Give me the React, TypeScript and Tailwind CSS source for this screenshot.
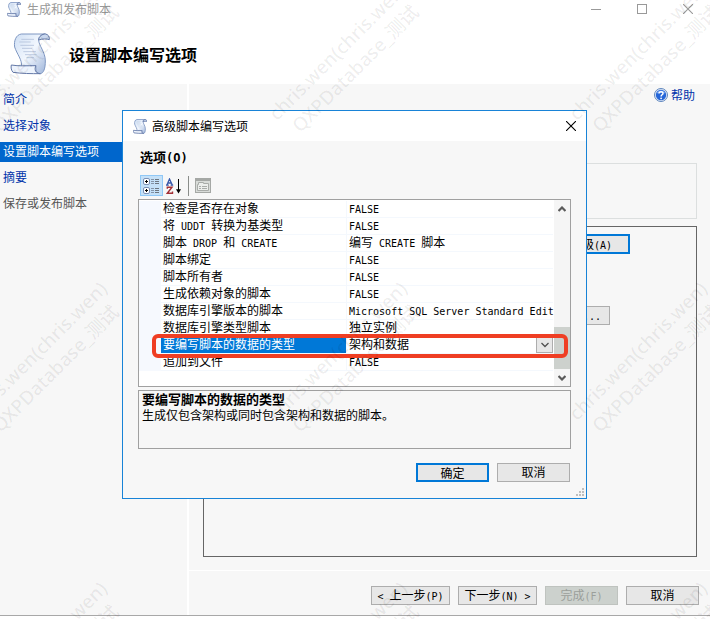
import { useState } from "react";
import type { ReactNode } from "react";

type Property = { name: string, value: string }

const STEPS = ["简介", "选择对象", "设置脚本编写选项", "摘要", "保存或发布脚本"];

const PROPERTIES: Property[] = [
  { name: "检查是否存在对象", value: "FALSE" },
  { name: "将 UDDT 转换为基类型", value: "FALSE" },
  { name: "脚本 DROP 和 CREATE", value: "编写 CREATE 脚本" },
  { name: "脚本绑定", value: "FALSE" },
  { name: "脚本所有者", value: "FALSE" },
  { name: "生成依赖对象的脚本", value: "FALSE" },
  { name: "数据库引擎版本的脚本", value: "Microsoft SQL Server Standard Edit" },
  { name: "数据库引擎类型脚本", value: "独立实例" },
  { name: "要编写脚本的数据的类型", value: "架构和数据" },
  { name: "追加到文件", value: "FALSE" },
];

const DATA_TYPES = ["仅限架构", "仅限数据", "架构和数据"];

// latin runs are half as wide as a chinese character
const Mixed = ({ text, latin = "text-[10px]" }: { text: string, latin?: string }) => (
  <span className="whitespace-pre">
    {text.split(/([ -~]+)/).filter(Boolean).map((part, i) =>
      /^[ -~]/.test(part) ? <span key={i} className={`font-['DejaVu_Sans_Mono',monospace] leading-none ${latin}`}>{part}</span> : part
    )}
  </span>
)

const ScrollIcon = ({ className, id, stroke = 3 }: { className: string, id: string, stroke?: number }) => (
  <svg viewBox="0 0 120 126" className={className} aria-hidden="true">
    <defs>
      <linearGradient id={id} x1="0" y1="0" x2="1" y2="1">
        <stop offset="0" stopColor="#cfdff4" />
        <stop offset="0.5" stopColor="#f2f7fe" />
        <stop offset="1" stopColor="#9fb5da" />
      </linearGradient>
    </defs>
    <path d="M34 3H106C96 4 86 10 86 21C86 38 106 56 106 84C106 106 101 121 91 122C80 122 76 112 78 100H34C38 82 20 62 14 42C11 24 18 5 34 3Z" fill={`url(#${id})`} stroke="#7f97c2" strokeWidth={stroke} />
    <path d="M86 21C86 10 97 3 106 3C114 4 119 10 118 20C110 17 98 17 86 21Z" fill="#c9d8ef" stroke="#6479a8" strokeWidth={stroke} />
    <path d="M4 96C26 100 50 98 78 98C72 108 76 122 91 122C64 122 36 122 9 118C4 112 2 104 4 96Z" fill="#eef4fd" stroke="#6479a8" strokeWidth={stroke} />
    <path d="M34 19H72M28 27H62M31 37H72M36 46H66M40 56H78M45 65H80M49 74H72" stroke="#b3c2db" strokeWidth="2.5" />
  </svg>
)

const CloseIcon = () => (
  <svg viewBox="0 0 10 10" className="size-[10px]" aria-hidden="true">
    <path d="M0 0L10 10M10 0L0 10" stroke="currentColor" strokeWidth="1.1" />
  </svg>
)

const Chevron = ({ up = false, thin = false }: { up?: boolean, thin?: boolean }) => (
  <svg viewBox="0 0 8 6" className="h-[6px] w-2" aria-hidden="true">
    <path d={up ? "M0.5 5L4 1.5L7.5 5" : "M0.5 1L4 4.5L7.5 1"} fill="none" stroke="currentColor" strokeWidth={thin ? 1.3 : 2.2} />
  </svg>
)

const HelpIcon = () => (
  <svg viewBox="0 0 14 14" className="size-[14px]" aria-hidden="true">
    <circle cx="7" cy="7" r="6.5" fill="#e4ecf7" stroke="#5f86bd" />
    <circle cx="7" cy="7" r="5.2" fill="#2566d8" />
    <path d="M2.6 5.5A4.8 4.8 0 0 1 11.4 5.5C9 4.4 5 4.6 2.6 5.5Z" fill="#6fa0f0" />
    <path d="M5 5.6C5 3 9.2 3.1 9 5.5C8.9 6.8 7.1 6.8 7.1 8.4" fill="none" stroke="#fff" strokeWidth="1.5" />
    <circle cx="7.1" cy="10.3" r="0.9" fill="#fff" />
  </svg>
)

const CategoryIcon = () => (
  <svg viewBox="0 0 17 16" className="h-4 w-[17px]" aria-hidden="true">
    {[0, 9].map((y) => (
      <g key={y} transform={`translate(0 ${y})`}>
        <rect x="0.5" y="0.5" width="6" height="6" rx="1.5" fill="#fff" stroke="#7a8fb5" />
        <path d="M2 3.5H5M3.5 2V5" stroke="#000" />
        <path d="M8 1.5H11M8 3.5H11M8 5.5H11" stroke="#8494a8" />
        <path d="M12 1.5H16M12 3.5H16M12 5.5H16" stroke="#6d7680" />
      </g>
    ))}
  </svg>
)

const SortIcon = () => (
  <svg viewBox="0 0 16 16" className="size-4" aria-hidden="true">
    <path d="M0 7.2H2.8M4.6 7.2H7.2M0.9 7L3.5 1L6.3 7M2 5H5" fill="none" stroke="#3556a8" strokeWidth="1.3" />
    <path d="M1.3 10.8V9.3H6L1.3 15.2H6.5V13.6" fill="none" stroke="#a33036" strokeWidth="1.4" />
    <path d="M12.5 1V14" stroke="#000" />
    <path d="M10 11.3H15L12.5 15.5Z" />
  </svg>
)

const PagesIcon = () => (
  <svg viewBox="0 0 16 15" className="h-[15px] w-4" aria-hidden="true">
    <rect x="0.5" y="0.5" width="15" height="14" fill="#d9dcd9" stroke="#a5a8a5" />
    <path d="M1 2H15" stroke="#a5a8a5" strokeWidth="2" />
    <path d="M2.5 6.5V12.5H13.5V5.5H8.5V4.5H3.5V6.5Z" fill="#eceeec" stroke="#a9aca9" />
    <path d="M4 8.5H6M7 8.5H12M4 10.5H6M7 10.5H12" stroke="#a9aca9" />
  </svg>
)

const Button = ({ children, className = "", primary = false, disabled = false }: { children: ReactNode, className?: string, primary?: boolean, disabled?: boolean }) => (
  <button
    type="button"
    disabled={disabled}
    className={`flex h-[19px] items-start justify-center leading-4 whitespace-pre ${primary
      ? "border-2 border-[#0078d7] bg-[#e7e7e7]"
      : disabled
        ? "border border-[#bfc3bf] bg-[#ccd1cd] text-[#9b9f9b]"
        : "border border-[#adadad] bg-[#e7e7e7]"
      } ${className}`}
  >
    {children}
  </button>
)

const PropertyGrid = () => {

  const [dataType, setDataType] = useState("架构和数据")

  return (
    <div className="relative flex h-[188px] border border-[#a0a0a0] bg-white">
      <div className="min-w-0 flex-1 overflow-hidden pt-px pr-px">
        <table className="w-full table-fixed border-separate border-spacing-0 leading-[14px]">
          <colgroup>
            <col className="w-[22px]" />
            <col className="w-[186px]" />
            <col />
          </colgroup>
          <tbody>
            {PROPERTIES.map((p, i) => {
              const selected = i === 8
              return (
                <tr key={p.name} className="h-[17px]">
                  <td className="bg-[#f6f9fe] p-0" />
                  <th
                    scope="row"
                    className={`border-r border-b border-[#f4f8fd] p-0 pl-[2px] text-left font-normal ${selected ? "bg-[#0078d7] text-white" : ""}`}
                  >
                    <div className="h-4">
                      {selected ? <label htmlFor="data-type">{p.name}</label> : <Mixed text={p.name} />}
                    </div>
                  </th>
                  <td className="border-b border-[#f4f8fd] p-0 pl-[2px]">
                    {selected ? (
                      <div className="relative flex h-4">
                        <select
                          id="data-type"
                          value={dataType}
                          onChange={(e) => setDataType(e.target.value)}
                          className="h-[14px] w-full appearance-none bg-transparent p-0 leading-[14px]"
                        >
                          {DATA_TYPES.map((t) => <option key={t}>{t}</option>)}
                        </select>
                        <span className="pointer-events-none absolute inset-y-0 right-0 flex w-[17px] items-center justify-center border border-[#adadad] bg-[#e7e7e7] text-[#505050]">
                          <Chevron thin />
                        </span>
                      </div>
                    ) : <div className="h-4"><Mixed text={p.value} /></div>}
                  </td>
                </tr>
              )
            })}
          </tbody>
        </table>
      </div>

      <div className="flex w-4 flex-col bg-[#f5f5f5] text-[#5a5a5a]">
        <button type="button" aria-label="向上滚动" className="flex h-[18px] items-center justify-center">
          <Chevron up />
        </button>
        <div className="flex flex-1 flex-col justify-end">
          <div className="h-[42px] bg-[#cdd1cd]" />
        </div>
        <button type="button" aria-label="向下滚动" className="flex h-[17px] items-center justify-center">
          <Chevron />
        </button>
      </div>

      {/* marker round the selected property */}
      <div className="pointer-events-none absolute top-[134px] right-[2px] left-[13px] h-6 rounded-md border-4 border-[#ef3e23]" />
    </div>
  )
}

const AdvancedDialog = () => (
  <section role="dialog" aria-label="高级脚本编写选项" className="absolute top-[110px] right-[123px] left-[122px] border border-[#1883d7] bg-[#f7f7f7]">
    <header className="flex h-[30px] items-center bg-white pr-[10px] pl-[10px]">
      <ScrollIcon id="dialog-scroll" stroke={7} className="h-[15px] w-[14px]" />
      <h2 className="ml-[5px] flex-1">高级脚本编写选项</h2>
      <button type="button" aria-label="关闭"><CloseIcon /></button>
    </header>

    <div className="px-[15px] pt-2 pb-4">
      <h3 className="h-4 pl-[2px] text-[13px] leading-4 font-bold">
        <Mixed text="选项(O)" latin="text-xs" />
      </h3>

      <div className="mt-[10px] flex h-[21px] items-center pl-[2px]">
        <button type="button" aria-label="按分类顺序" className="flex h-[21px] w-[23px] items-center justify-center border border-[#90c8f6] bg-[#c5e1f8]">
          <CategoryIcon />
        </button>
        <button type="button" aria-label="字母顺序" className="ml-[3px]"><SortIcon /></button>
        <div className="ml-[6px] h-5 w-px bg-[#8a8d8a]" />
        <button type="button" aria-label="属性页" disabled className="ml-[6px]"><PagesIcon /></button>
      </div>

      <div className="mt-[3px]">
        <PropertyGrid />
      </div>

      <div className="mt-[3px] h-[59px] border border-[#a0a0a0] px-[3px]">
        <h4 className="text-[13px] leading-4 font-bold">要编写脚本的数据的类型</h4>
        <p className="leading-4">生成仅包含架构或同时包含架构和数据的脚本。</p>
      </div>

      <div className="mt-[14px] flex justify-end gap-2 pr-px">
        <Button primary className="w-[73px]">确定</Button>
        <Button className="w-[73px]">取消</Button>
      </div>
    </div>

    <svg viewBox="0 0 8 8" className="absolute right-[2px] bottom-[2px] size-2" shapeRendering="crispEdges" aria-hidden="true">
      <path d="M6 0h2v2h-2zM3 3h2v2h-2zM6 3h2v2h-2zM0 6h2v2h-2zM3 6h2v2h-2zM6 6h2v2h-2z" fill="#bfbfbf" />
    </svg>
  </section>
)

const Watermark = () => (
  <div aria-hidden="true" className="pointer-events-none absolute inset-0 overflow-hidden">
    <div className="absolute -top-[90px] -left-[103px] grid auto-rows-[300px] grid-cols-[repeat(3,300px)]">
      {Array.from({ length: 9 }, (_, i) => (
        <div key={i} className="flex items-center justify-center">
          <p className="-rotate-45 text-center font-['Noto_Sans','Noto_Sans_CJK_SC',sans-serif] text-[19px] leading-[25px] font-medium whitespace-nowrap text-black/7">
            chris.wen(chris.wen)<br />QXPDatabase_测试
          </p>
        </div>
      ))}
    </div>
  </div>
)

const App = () => (
  <div className="relative flex min-h-screen flex-col overflow-hidden bg-white pb-[3px] font-['Noto_Sans_CJK_SC',sans-serif] text-xs text-black">
    <header className="flex h-[18px] items-center pr-[17px] pl-[7px] text-[#999]">
      <ScrollIcon id="title-scroll" stroke={7} className="h-[15px] w-[14px]" />
      <h1 className="ml-[6px] flex-1">生成和发布脚本</h1>
      <div className="flex gap-9">
        <button type="button" aria-label="最小化" className="flex size-[10px] items-center">
          <span className="h-px w-full bg-[#999]" />
        </button>
        <button type="button" aria-label="最大化" className="size-[10px] border border-[#999]" />
        <button type="button" aria-label="关闭"><CloseIcon /></button>
      </div>
    </header>

    <div className="flex h-[66px] items-center pt-[6px] pl-[10px]">
      <ScrollIcon id="page-scroll" className="h-[42px] w-10" />
      <h2 className="ml-[19px] text-base font-bold">设置脚本编写选项</h2>
    </div>

    <div className="flex flex-1 border-b border-[#a8a8a8] bg-[#f7f7f7]">
      <nav className="flex w-[189px] flex-col gap-[6px] border-r-2 border-white pt-[6px]">
        {STEPS.map((step, i) => (
          <a
            key={step}
            href="#"
            className={`h-5 pl-[3px] leading-[18px] ${i === 2
              ? "bg-[#0066cc] text-white"
              : i === 4
                ? "text-[#555]"
                : "text-[#0033aa]"
              }`}
          >
            {step}
          </a>
        ))}
      </nav>

      <div className="flex min-w-0 flex-1 flex-col">
        <main className="flex flex-1 flex-col pr-[13px] pb-[13px] pl-[14px]">
          <a href="#" className="flex h-[22px] items-center gap-[3px] self-end pr-[2px] text-[#0033aa]">
            <HelpIcon /> 帮助
          </a>
          <div className="mt-[57px] h-14 border border-[#dcdfdf]" />
          <div className="mt-[7px] flex flex-1 flex-col items-end border border-[#666] pt-[7px]">
            <Button primary className="mr-[66px] h-[20px] w-[78px]"><Mixed text="高级(A)" /></Button>
            <Button className="mt-[52px] mr-[86px] h-4 w-9"><Mixed text="..." /></Button>
          </div>
        </main>

        <footer className="flex justify-end gap-2 border-t border-white pt-[15px] pr-[11px] pb-[10px]">
          <Button className="w-[79px]"><Mixed text="< 上一步(P)" /></Button>
          <Button className="w-[79px]"><Mixed text="下一步(N) >" /></Button>
          <Button disabled className="w-[73px]"><Mixed text="完成(F)" /></Button>
          <Button className="w-[73px]">取消</Button>
        </footer>
      </div>
    </div>

    <AdvancedDialog />
    <Watermark />
  </div>
)

export default App;
